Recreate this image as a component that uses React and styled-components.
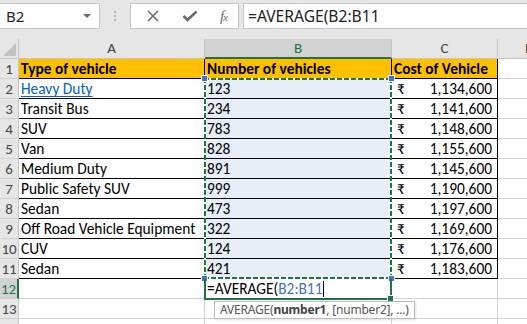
import styled, { createGlobalStyle } from "styled-components";

const CELL_FONT = `Carlito, Lato, "Liberation Sans", sans-serif`;
const UI_FONT = `"Noto Sans", "Open Sans", sans-serif`;
const GREEN = "#217346";
const BLUE = "#4472c4";

const GlobalStyle = createGlobalStyle`
  body {
    margin: 0;
    background: #fff;
  }
`;

const Window = styled.div`
  width: 527px;
  height: 324px;
  overflow: hidden;
  background: #fff;
  font-family: ${CELL_FONT};
`;

const Bar = styled.div`
  display: flex;
  align-items: flex-start;
  height: 39px;
  padding-top: 3px;
  box-sizing: border-box;
  background: #e6e6e6;
`;

const NameBox = styled.div`
  width: 101px;
  height: 26px;
  margin-left: -1px;
  box-sizing: border-box;
  background: #fff;
  border: 1px solid #c6c6c6;
  display: flex;
  align-items: center;
  justify-content: space-between;
  padding: 0 8px 0 6px;
  font: 15px ${UI_FONT};
  color: #262626;
`;

const Caret = styled.span`
  width: 0;
  height: 0;
  border-left: 4px solid transparent;
  border-right: 4px solid transparent;
  border-top: 4px solid #6a6a6a;
`;

const Grip = styled.div`
  width: 30px;
  height: 26px;
  display: flex;
  flex-direction: column;
  align-items: center;
  justify-content: center;
  gap: 2px;

  span {
    width: 2px;
    height: 2px;
    background: #b4b4b4;
  }
`;

const IconBox = styled.div`
  width: 109px;
  height: 26px;
  box-sizing: border-box;
  background: #fff;
  border: 1px solid #c6c6c6;
  display: flex;
  align-items: center;
  justify-content: space-around;
  padding-left: 4px;
  color: #6b6b6b;
`;

const Fx = styled.span`
  font: italic 15px "Liberation Serif", serif;
  color: #6b6b6b;
  letter-spacing: -1px;

  small {
    font-size: 11px;
  }
`;

const FormulaInput = styled.div`
  flex: 1;
  height: 26px;
  margin-left: 4px;
  box-sizing: border-box;
  background: #fff;
  border: 1px solid #c6c6c6;
  border-right: none;
  padding-left: 4px;
  font: 15.6px/24px ${UI_FONT};
  color: #222;
  white-space: nowrap;
`;

const Grid = styled.div`
  display: grid;
  grid-template-columns: 19px 186px 187px 106px 64px;
  grid-auto-rows: 20px;
`;

const Corner = styled.div`
  grid-row: 1;
  grid-column: 1;
  box-sizing: border-box;
  background: #e6e6e6;
  border-right: 1px solid #c6c6c6;
  border-bottom: 1px solid #c6c6c6;
  display: flex;
  align-items: flex-end;
  justify-content: flex-end;
  padding: 0 2px 2px 0;

  &::after {
    content: "";
    border-left: 13px solid transparent;
    border-bottom: 13px solid #c2c2c2;
  }
`;

const ColHead = styled.div`
  grid-row: 1;
  grid-column: ${(p) => p.$col};
  box-sizing: border-box;
  background: ${(p) => (p.$active ? "#d2d2d2" : "#e6e6e6")};
  color: ${(p) => (p.$active ? GREEN : "#444")};
  border-right: 1px solid #c6c6c6;
  border-bottom: ${(p) => (p.$active ? `2px solid ${GREEN}` : "1px solid #c6c6c6")};
  text-align: center;
  font-size: 15px;
  line-height: 19px;
`;

const RowHead = styled.div`
  grid-row: ${(p) => p.$row};
  grid-column: 1;
  box-sizing: border-box;
  background: ${(p) => (p.$active ? "#d2d2d2" : "#e6e6e6")};
  color: ${(p) => (p.$active ? GREEN : "#444")};
  border-right: ${(p) => (p.$active ? `2px solid ${GREEN}` : "1px solid #c6c6c6")};
  border-bottom: 1px solid #d0d0d0;
  text-align: center;
  font-size: 15px;
  line-height: 20px;
`;

const Cell = styled.div`
  grid-row: ${(p) => p.$row};
  grid-column: ${(p) => p.$col};
  box-sizing: border-box;
  min-width: 0;
  background: ${(p) => p.$bg || "#fff"};
  border-right: 1px solid ${(p) => (p.$table ? "#000" : "#d4d4d4")};
  border-bottom: 1px solid ${(p) => (p.$table ? "#000" : "#d4d4d4")};
  padding: 0 2px;
  font-size: 15.4px;
  font-weight: ${(p) => (p.$bold ? 700 : 400)};
  line-height: 20px;
  color: #000;
  white-space: nowrap;
  overflow: ${(p) => (p.$spill ? "visible" : "hidden")};
  position: relative;
  z-index: ${(p) => (p.$spill ? 2 : "auto")};
`;

const Link = styled.span`
  color: #0563c1;
  text-decoration: underline;
  text-underline-offset: 2px;
`;

const Money = styled.div`
  display: flex;
  justify-content: space-between;
  padding: 0 3px;
`;

const RefText = styled.span`
  color: ${BLUE};
`;

const Cursor = styled.span`
  display: inline-block;
  width: 1px;
  height: 16px;
  margin-left: 1px;
  vertical-align: -3px;
  background: #000;
`;

const dash = (dir) =>
  `repeating-linear-gradient(${dir}, ${GREEN} 0 5px, #fff 5px 7px)`;

const Ants = styled.div`
  grid-column: 3;
  grid-row: 3 / 13;
  margin: -1px 0 0 -1px;
  position: relative;
  z-index: 3;
  pointer-events: none;
  background:
    ${dash("90deg")} top / 100% 2px no-repeat,
    ${dash("90deg")} bottom / 100% 2px no-repeat,
    ${dash("180deg")} left / 2px 100% no-repeat,
    ${dash("180deg")} right / 2px 100% no-repeat;
`;

const Handle = styled.span`
  position: absolute;
  width: 5px;
  height: 5px;
  background: ${BLUE};
  border: 1px solid #fff;
  ${(p) => (p.$top ? "top: -3px;" : "bottom: -3px;")}
  ${(p) => (p.$left ? "left: -3px;" : "right: -3px;")}
`;

const ActiveCell = styled.div`
  grid-column: 3;
  grid-row: 13;
  margin: 0 0 -1px -1px;
  position: relative;
  z-index: 3;
  pointer-events: none;
  border: 2px solid ${GREEN};
  border-top: none;
`;

const ActiveHandle = styled.span`
  position: absolute;
  right: -4px;
  bottom: -4px;
  width: 5px;
  height: 5px;
  background: ${GREEN};
  border: 1px solid #fff;
`;

const Tooltip = styled.div`
  grid-column: 3 / 5;
  grid-row: 14;
  justify-self: start;
  align-self: start;
  margin: 2px 0 0 9px;
  position: relative;
  z-index: 4;
  height: 18px;
  box-sizing: border-box;
  padding: 0 5px 0 5px;
  background: #fff;
  border: 1px solid #bcbcbc;
  box-shadow: 1px 1px 2px rgba(0, 0, 0, 0.12);
  font: 12px/16px ${UI_FONT};
  letter-spacing: -0.2px;
  color: #555;
  white-space: nowrap;

  b {
    color: #444;
  }
`;

const rows = [
  ["Heavy Duty", "123", "1,134,600"],
  ["Transit Bus", "234", "1,141,600"],
  ["SUV", "783", "1,148,600"],
  ["Van", "828", "1,155,600"],
  ["Medium Duty", "891", "1,145,600"],
  ["Public Safety SUV", "999", "1,190,600"],
  ["Sedan", "473", "1,197,600"],
  ["Off Road Vehicle Equipment", "322", "1,169,600"],
  ["CUV", "124", "1,176,600"],
  ["Sedan", "421", "1,183,600"],
];

const CrossIcon = () => (
  <svg width="14" height="14" viewBox="0 0 14 14">
    <path d="M2 2 L12 12 M12 2 L2 12" stroke="#6b6b6b" strokeWidth="1.6" fill="none" />
  </svg>
);

const CheckIcon = () => (
  <svg width="16" height="14" viewBox="0 0 16 14">
    <path d="M1.5 7 L5.5 11 L14.5 2.5" stroke="#6b6b6b" strokeWidth="2.6" fill="none" />
  </svg>
);

const App = () => {
  const headers = ["Type of vehicle", "Number of vehicles", "Cost of Vehicle"];

  return (
    <Window>
      <GlobalStyle />
      <Bar>
        <NameBox>
          B2
          <Caret />
        </NameBox>
        <Grip>
          <span />
          <span />
          <span />
        </Grip>
        <IconBox>
          <CrossIcon />
          <CheckIcon />
          <Fx>
            f<small>x</small>
          </Fx>
        </IconBox>
        <FormulaInput>=AVERAGE(B2:B11</FormulaInput>
      </Bar>

      <Grid>
        <Corner />
        <ColHead $col={2}>A</ColHead>
        <ColHead $col={3} $active>
          B
        </ColHead>
        <ColHead $col={4}>C</ColHead>
        <ColHead $col={5}>D</ColHead>

        {Array.from({ length: 14 }, (_, i) => (
          <RowHead key={i} $row={i + 2} $active={i + 1 === 12}>
            {i + 1 < 14 ? i + 1 : ""}
          </RowHead>
        ))}

        {headers.map((h, i) => (
          <Cell key={h} $row={2} $col={i + 2} $bg="#ffc000" $table $bold>
            {h}
          </Cell>
        ))}
        <Cell $row={2} $col={5} />

        {rows.map(([type, count, cost], i) => (
          <>
            <Cell key={`a${i}`} $row={i + 3} $col={2} $table>
              {i === 0 ? <Link>{type}</Link> : type}
            </Cell>
            <Cell key={`b${i}`} $row={i + 3} $col={3} $table $bg="#e8eef8">
              {count}
            </Cell>
            <Cell key={`c${i}`} $row={i + 3} $col={4} $table>
              <Money>
                <span>₹</span>
                <span>{cost}</span>
              </Money>
            </Cell>
            <Cell key={`d${i}`} $row={i + 3} $col={5} />
          </>
        ))}

        {[13, 14, 15].map((r) =>
          [2, 3, 4, 5].map((c) => (
            <Cell key={`${r}-${c}`} $row={r} $col={c} $spill={r === 13 && c === 3}>
              {r === 13 && c === 3 && (
                <>
                  =AVERAGE(<RefText>B2:B11</RefText>
                  <Cursor />
                </>
              )}
            </Cell>
          ))
        )}

        <Ants>
          <Handle $top $left />
          <Handle $top />
          <Handle $left />
          <Handle />
        </Ants>
        <ActiveCell>
          <ActiveHandle />
        </ActiveCell>
        <Tooltip>
          AVERAGE(<b>number1</b>, [number2], ...)
        </Tooltip>
      </Grid>
    </Window>
  );
};

export default App;
